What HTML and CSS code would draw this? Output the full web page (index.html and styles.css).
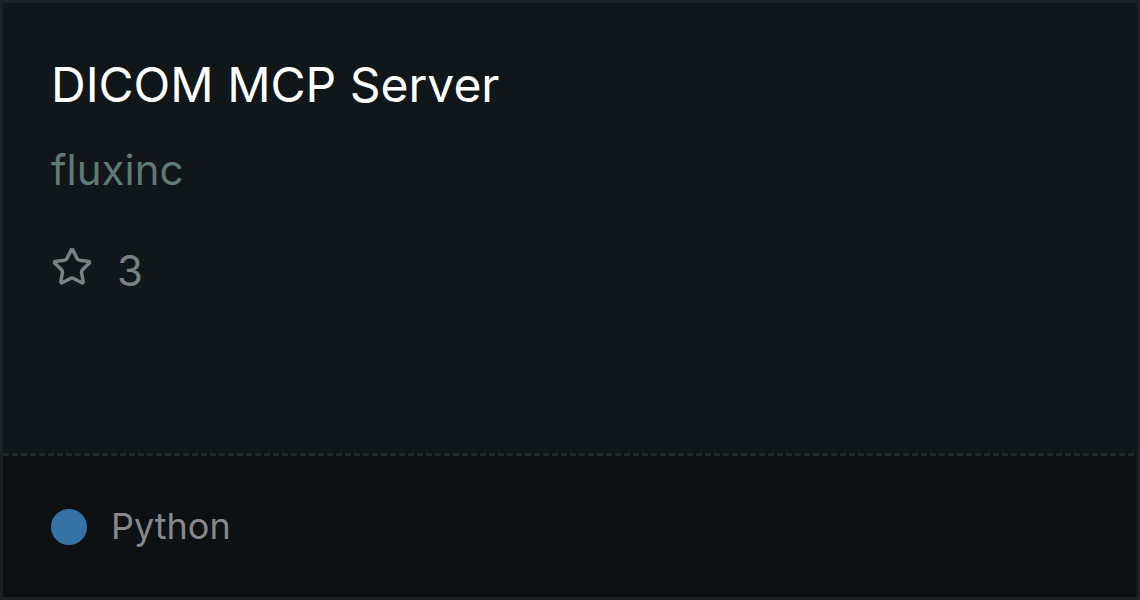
FILE: index.html
```html
<!DOCTYPE html>
<html lang="en">
<head>
    <meta charset="UTF-8">
    <meta name="viewport" content="width=device-width, initial-scale=1.0">
    <title>DICOM MCP Server</title>
    <link rel="stylesheet" href="styles.css">
</head>
<body>
    <!-- Tarjeta del repositorio -->
    <article class="card">
        <section class="card-body">
            <h1 class="title">DICOM MCP Server</h1>
            <p class="owner">fluxinc</p>
            <div class="stars">
                <svg class="star-icon" viewBox="0 0 24 24" fill="none" stroke="currentColor" stroke-width="2" stroke-linecap="round" stroke-linejoin="round">
                    <path d="M11.525 2.295a.53.53 0 0 1 .95 0l2.31 4.679a2.123 2.123 0 0 0 1.595 1.16l5.166.756a.53.53 0 0 1 .294.904l-3.736 3.638a2.123 2.123 0 0 0-.611 1.878l.882 5.14a.53.53 0 0 1-.771.56l-4.618-2.428a2.122 2.122 0 0 0-1.973 0L6.396 21.01a.53.53 0 0 1-.77-.56l.881-5.139a2.122 2.122 0 0 0-.611-1.879L2.16 9.795a.53.53 0 0 1 .294-.906l5.165-.755a2.122 2.122 0 0 0 1.597-1.16z"/>
                </svg>
                <span class="star-count">3</span>
            </div>
        </section>

        <!-- Pie con el lenguaje -->
        <footer class="card-footer">
            <span class="lang-dot"></span>
            <span class="lang-name">Python</span>
        </footer>
    </article>
</body>
</html>
```

FILE: styles.css
```css
html, body {
    margin: 0;
    padding: 0;
    background-color: #10171a;
}

body {
    font-family: Inter, "Noto Sans", sans-serif;
}

.card {
    box-sizing: border-box;
    width: 1140px;
    height: 600px;
    border: 3px solid #1b2226;
    background-color: #10171a;
    display: flex;
    flex-direction: column;
}

.card-body {
    flex: 1;
    padding: 53px 48px 0 48px;
}

.title {
    margin: 0;
    font-size: 48px;
    font-weight: 400;
    line-height: 1.2;
    color: #ffffff;
}

.owner {
    margin: 31px 0 0 0;
    font-size: 42px;
    line-height: 1.2;
    color: #5f7a75;
}

.stars {
    margin-top: 51px;
    display: flex;
    align-items: flex-start;
    gap: 24px;
    color: #7b8084;
}

.star-icon {
    width: 42px;
    height: 42px;
    flex-shrink: 0;
}

.star-count {
    font-size: 42px;
    line-height: 1.2;
    color: #7b8084;
}

/* Pie con borde punteado */
.card-footer {
    height: 144px;
    box-sizing: border-box;
    padding: 3px 48px 0 48px;
    display: flex;
    align-items: center;
    gap: 24px;
    background:
        repeating-linear-gradient(to right, #22292d 0 6px, transparent 6px 9px) top left / 100% 3px no-repeat,
        #0d1114;
}

.lang-dot {
    width: 36px;
    height: 36px;
    border-radius: 50%;
    background-color: #3572a5;
    flex-shrink: 0;
}

.lang-name {
    font-size: 36px;
    line-height: 1.2;
    color: #85898c;
}
```
